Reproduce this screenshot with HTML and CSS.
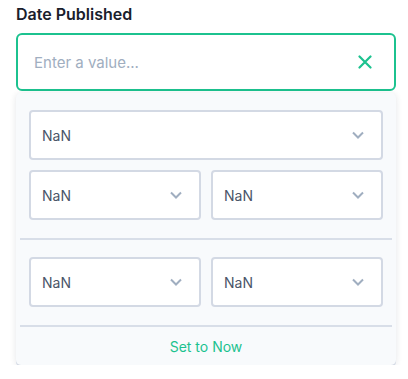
FILE: index.html
```html
<!DOCTYPE html>
<html lang="en">
<head>
    <meta charset="UTF-8">
    <meta name="viewport" content="width=device-width, initial-scale=1.0">
    <title>Date Published</title>
    <link rel="stylesheet" href="styles.css">
</head>
<body>
    <div class="field">
        <label class="field-label">Date Published</label>
        <div class="date-input">
            <span class="placeholder">Enter a value...</span>
            <svg class="clear-icon" width="14" height="14" viewBox="0 0 14 14">
                <path d="M1.5 1.5 L12.5 12.5 M12.5 1.5 L1.5 12.5" stroke="#1cc28f" stroke-width="2.2" stroke-linecap="round" fill="none"/>
            </svg>
        </div>

        <div class="picker">
            <div class="picker-section">
                <div class="select">
                    <span>NaN</span>
                    <svg class="chevron" width="12" height="8" viewBox="0 0 12 8"><polyline points="1,1.5 6,6.5 11,1.5" fill="none" stroke="#a0aec0" stroke-width="2"/></svg>
                </div>
                <div class="select-row">
                    <div class="select">
                        <span>NaN</span>
                        <svg class="chevron" width="12" height="8" viewBox="0 0 12 8"><polyline points="1,1.5 6,6.5 11,1.5" fill="none" stroke="#a0aec0" stroke-width="2"/></svg>
                    </div>
                    <div class="select">
                        <span>NaN</span>
                        <svg class="chevron" width="12" height="8" viewBox="0 0 12 8"><polyline points="1,1.5 6,6.5 11,1.5" fill="none" stroke="#a0aec0" stroke-width="2"/></svg>
                    </div>
                </div>
            </div>
            <div class="divider"></div>
            <div class="picker-section">
                <div class="select-row">
                    <div class="select">
                        <span>NaN</span>
                        <svg class="chevron" width="12" height="8" viewBox="0 0 12 8"><polyline points="1,1.5 6,6.5 11,1.5" fill="none" stroke="#a0aec0" stroke-width="2"/></svg>
                    </div>
                    <div class="select">
                        <span>NaN</span>
                        <svg class="chevron" width="12" height="8" viewBox="0 0 12 8"><polyline points="1,1.5 6,6.5 11,1.5" fill="none" stroke="#a0aec0" stroke-width="2"/></svg>
                    </div>
                </div>
            </div>
            <div class="divider"></div>
            <div class="picker-footer">Set to Now</div>
        </div>
    </div>
</body>
</html>
```

FILE: styles.css
```css
body { margin: 0; padding: 4px 12px 0 16px; font-family: Inter, "Noto Sans", sans-serif; background: #fff; }
.field { width: 380px; }
.field-label { display: block; font-size: 16px; font-weight: 600; color: #1a202c; line-height: 20px; margin-bottom: 9px; }
.date-input { display: flex; align-items: center; justify-content: space-between; box-sizing: border-box; height: 58px; padding: 0 22px 0 16px; border: 2px solid #1cc28f; border-radius: 6px; background: #fff; }
.placeholder { font-size: 15px; color: #a0aec0; }
.picker { margin-top: 2px; background: #f8fafc; border-radius: 5px; box-shadow: 0 2px 0 #d5dbe5, 0 1px 6px rgba(30, 40, 60, 0.12); }
.picker-section { display: flex; flex-direction: column; gap: 10px; padding: 17px 13px 18px; }
.select-row { display: flex; gap: 10px; }
.select-row .select { flex: 1; }
.select { display: flex; align-items: center; justify-content: space-between; box-sizing: border-box; height: 50px; padding: 0 17px 0 11px; border: 2px solid #d3d9e4; border-radius: 4px; background: #fff; font-size: 14px; color: #4a5568; }
.chevron { display: block; }
.divider { height: 2px; margin: 0 4px; background: #d8dee8; }
.picker-footer { height: 38px; display: flex; align-items: center; justify-content: center; font-size: 14px; color: #1cc28f; }
```
